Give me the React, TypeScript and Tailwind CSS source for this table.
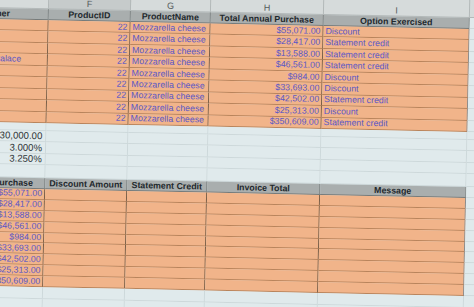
import React from "react";
import clsx from "clsx";

const COLS = "grid grid-cols-[118px_82px_80px_113px_146px_80px]";

type Order = {
  customer: string;
  total: string;
  option: string;
};

const orders: Order[] = [
  { customer: "", total: "$55,071.00", option: "Discount" },
  { customer: "", total: "$28,417.00", option: "Statement credit" },
  { customer: "", total: "$13,588.00", option: "Statement credit" },
  { customer: "Big Lou's Pizza Palace", total: "$46,561.00", option: "Statement credit" },
  { customer: "", total: "$984.00", option: "Discount" },
  { customer: "", total: "$33,693.00", option: "Discount" },
  { customer: "", total: "$42,502.00", option: "Statement credit" },
  { customer: "", total: "$25,313.00", option: "Discount" },
  { customer: "", total: "$350,609.00", option: "Statement credit" },
];

// orange data cell
function Cell({
  children,
  className,
  last,
}: {
  children?: React.ReactNode;
  className?: string;
  last?: boolean;
}) {
  return (
    <div
      className={clsx(
        "h-full flex items-center px-[2px] whitespace-nowrap overflow-hidden bg-[#f1b48a] border-b border-[#b8845c]",
        last ? "border-r border-r-[#8c8c8c]" : "border-r border-r-[#7a6049]",
        className
      )}
    >
      {children}
    </div>
  );
}

function HeadCell({ children, last }: { children?: React.ReactNode; last?: boolean }) {
  return (
    <div
      className={clsx(
        "h-full flex items-center justify-center whitespace-nowrap overflow-hidden bg-[#a9aeae] font-bold text-[#1f292d] border-b border-[#757b7b]",
        last ? "border-r border-r-[#8a9090]" : "border-r border-r-[#7f8585]"
      )}
    >
      {children}
    </div>
  );
}

function Blank() {
  return <div className="h-full border-r border-b border-[#cdd8da] bg-[#e0eaec]" />;
}

function LightRow({ h, text }: { h: string; text?: string }) {
  return (
    <div className={clsx(COLS, h)}>
      <div className="h-full flex items-center justify-end px-[3px] border-r border-b border-[#cdd8da] bg-[#e1ebed] text-[#2e3436] text-[9.6px]">
        {text}
      </div>
      <Blank />
      <Blank />
      <Blank />
      <Blank />
      <Blank />
    </div>
  );
}

export default function App() {
  return (
    <div className="w-[474px] h-[307px] overflow-hidden bg-[#dde6e8] font-['Liberation_Sans',Arial,sans-serif] text-[8.8px] leading-none">
      <div className="-ml-[72px] -mt-[14px] w-[620px] rotate-[1.2deg] origin-[157px_164px]">
        {/* column letters */}
        <div className={clsx(COLS, "h-[24px] bg-[#d6dbdb] text-[#555b5d] text-[9px]")}>
          {["E", "F", "G", "H", "I", "J"].map((l) => (
            <div
              key={l}
              className={clsx(
                "h-full flex items-end justify-center pb-[0px] border-r border-b border-[#b3b9b9]",
                l === "F" && "bg-[#c6cbcb]"
              )}
            >
              {l === "E" || l === "J" ? "" : l}
            </div>
          ))}
        </div>

        {/* first table */}
        <div className={clsx(COLS, "h-[11px]")}>
          <HeadCell>Customer</HeadCell>
          <HeadCell>ProductID</HeadCell>
          <HeadCell>ProductName</HeadCell>
          <HeadCell>Total Annual Purchase</HeadCell>
          <HeadCell last>Option Exercised</HeadCell>
          <Blank />
        </div>
        {orders.map((o, i) => (
          <div key={i} className={clsx(COLS, "h-[11.45px] text-[#5b58c6]")}>
            <Cell>{o.customer}</Cell>
            <Cell className="justify-end">22</Cell>
            <Cell>Mozzarella cheese</Cell>
            <Cell className="justify-end">{o.total}</Cell>
            <Cell last>{o.option}</Cell>
            <Blank />
          </div>
        ))}

        {/* constants */}
        <LightRow h="h-[8px]" />
        <LightRow h="h-[11.5px]" text="$30,000.00" />
        <LightRow h="h-[11.5px]" text="3.000%" />
        <LightRow h="h-[11.5px]" text="3.250%" />
        <LightRow h="h-[12.5px]" />

        {/* second table */}
        <div className={clsx(COLS, "h-[11px]")}>
          <HeadCell>Total Annual Purchase</HeadCell>
          <HeadCell>Discount Amount</HeadCell>
          <HeadCell>Statement Credit</HeadCell>
          <HeadCell>Invoice Total</HeadCell>
          <HeadCell last>Message</HeadCell>
          <Blank />
        </div>
        {orders.map((o, i) => (
          <div key={i} className={clsx(COLS, "h-[10.9px] text-[#5b58c6]")}>
            <Cell className="justify-end">{o.total}</Cell>
            <Cell />
            <Cell />
            <Cell />
            <Cell last />
            <Blank />
          </div>
        ))}

        <LightRow h="h-[12px]" />
        <LightRow h="h-[12px]" />
        <LightRow h="h-[12px]" />
      </div>
    </div>
  );
}
